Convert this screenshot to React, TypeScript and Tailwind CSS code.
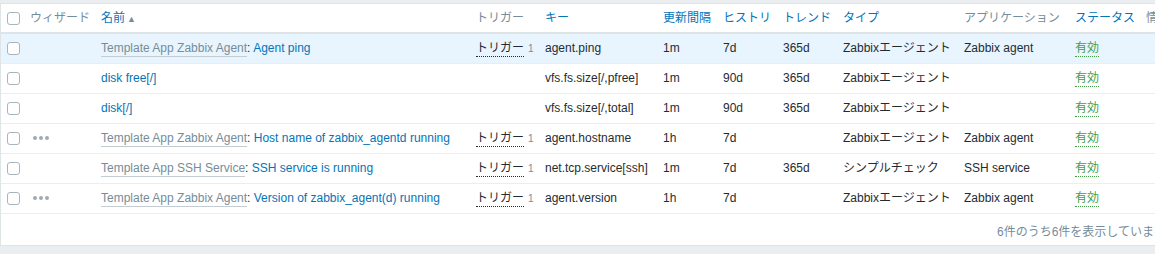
const font = { fontFamily: '"Liberation Sans", Arial, "Noto Sans CJK JP", sans-serif' };

type Item = {
  wizard?: boolean;
  template?: string;
  name: string;
  trigger?: boolean;
  key: string;
  interval: string;
  history: string;
  trends: string;
  type: string;
  app: string;
  hover?: boolean;
};

const items: Item[] = [
  { template: "Template App Zabbix Agent", name: "Agent ping", trigger: true, key: "agent.ping", interval: "1m", history: "7d", trends: "365d", type: "Zabbixエージェント", app: "Zabbix agent", hover: true },
  { name: "disk free[/]", key: "vfs.fs.size[/,pfree]", interval: "1m", history: "90d", trends: "365d", type: "Zabbixエージェント", app: "" },
  { name: "disk[/]", key: "vfs.fs.size[/,total]", interval: "1m", history: "90d", trends: "365d", type: "Zabbixエージェント", app: "" },
  { wizard: true, template: "Template App Zabbix Agent", name: "Host name of zabbix_agentd running", trigger: true, key: "agent.hostname", interval: "1h", history: "7d", trends: "", type: "Zabbixエージェント", app: "Zabbix agent" },
  { template: "Template App SSH Service", name: "SSH service is running", trigger: true, key: "net.tcp.service[ssh]", interval: "1m", history: "7d", trends: "365d", type: "シンプルチェック", app: "SSH service" },
  { wizard: true, template: "Template App Zabbix Agent", name: "Version of zabbix_agent(d) running", trigger: true, key: "agent.version", interval: "1h", history: "7d", trends: "", type: "Zabbixエージェント", app: "Zabbix agent" },
];

// column widths, summing to the table width
const widths = [24, 71, 375, 69, 118, 60, 60, 60, 121, 111, 71, 36];

function Checkbox() {
  return <span className="block h-[13px] w-[13px] rounded-[3px] border border-[#a9b5bc] bg-white" />;
}

function Th({ children, link }: { children?: React.ReactNode; link?: boolean }) {
  return (
    <th className={`px-[5px] text-left font-normal whitespace-nowrap ${link ? "text-[#0275b8]" : "text-[#768d99]"}`}>
      {children}
    </th>
  );
}

export default function App() {
  return (
    <div className="h-[254px] w-[1155px] overflow-hidden bg-[#ebeef0] pt-[3px]" style={font}>
      <div className="h-[243px] w-[1178px] border border-[#dfe4e7] bg-white text-[12px] text-[#1f2c33]">
        <table className="w-[1176px] table-fixed border-collapse">
          <colgroup>
            {widths.map((w, i) => (
              <col key={i} style={{ width: w }} />
            ))}
          </colgroup>
          <thead>
            <tr className="h-[29px] border-b-2 border-[#dfe4e7]">
              <th className="pl-[6px] pt-[1px] text-left">
                <Checkbox />
              </th>
              <Th>ウィザード</Th>
              <Th link>
                名前<span className="ml-[2px] text-[9px] text-[#768d99]">▲</span>
              </Th>
              <Th>トリガー</Th>
              <Th link>キー</Th>
              <Th link>更新間隔</Th>
              <Th link>ヒストリ</Th>
              <Th link>トレンド</Th>
              <Th link>タイプ</Th>
              <Th>アプリケーション</Th>
              <Th link>ステータス</Th>
              <Th>情報</Th>
            </tr>
          </thead>
          <tbody>
            {items.map((it, i) => (
              <tr key={i} className={`h-[30px] border-b border-[#ebeef0] ${it.hover ? "bg-[#e8f5ff]" : ""}`}>
                <td className="pl-[6px]">
                  <Checkbox />
                </td>
                <td className="px-[5px]">
                  {it.wizard && (
                    <span className="flex gap-[2px] pl-[3px]">
                      <span className="h-[4px] w-[4px] rounded-full bg-[#9fabb2]" />
                      <span className="h-[4px] w-[4px] rounded-full bg-[#9fabb2]" />
                      <span className="h-[4px] w-[4px] rounded-full bg-[#9fabb2]" />
                    </span>
                  )}
                </td>
                <td className="px-[5px] whitespace-nowrap">
                  {it.template && (
                    <>
                      <span className="border-b border-[#c3ccd1] pb-[1px] text-[#768d99]">{it.template}</span>
                      <span>: </span>
                    </>
                  )}
                  <span className="text-[#0275b8]">{it.name}</span>
                </td>
                <td className="px-[5px] whitespace-nowrap">
                  {it.trigger && (
                    <>
                      <span className="border-b border-dotted border-[#1f2c33] pb-[1px]">トリガー</span>
                      <span className="ml-[4px] text-[10px] text-[#768d99]">1</span>
                    </>
                  )}
                </td>
                <td className="px-[5px] whitespace-nowrap">{it.key}</td>
                <td className="px-[5px]">{it.interval}</td>
                <td className="px-[5px]">{it.history}</td>
                <td className="px-[5px]">{it.trends}</td>
                <td className="px-[5px] whitespace-nowrap">{it.type}</td>
                <td className="px-[5px] whitespace-nowrap">{it.app}</td>
                <td className="px-[5px]">
                  <span className="border-b border-dotted border-[#429e47] pb-[1px] text-[#429e47]">有効</span>
                </td>
                <td className="px-[5px]" />
              </tr>
            ))}
          </tbody>
        </table>
        <div className="pt-[9px] pr-[11px] text-right whitespace-nowrap text-[#768d99]">6件のうち6件を表示しています</div>
      </div>
    </div>
  );
}
